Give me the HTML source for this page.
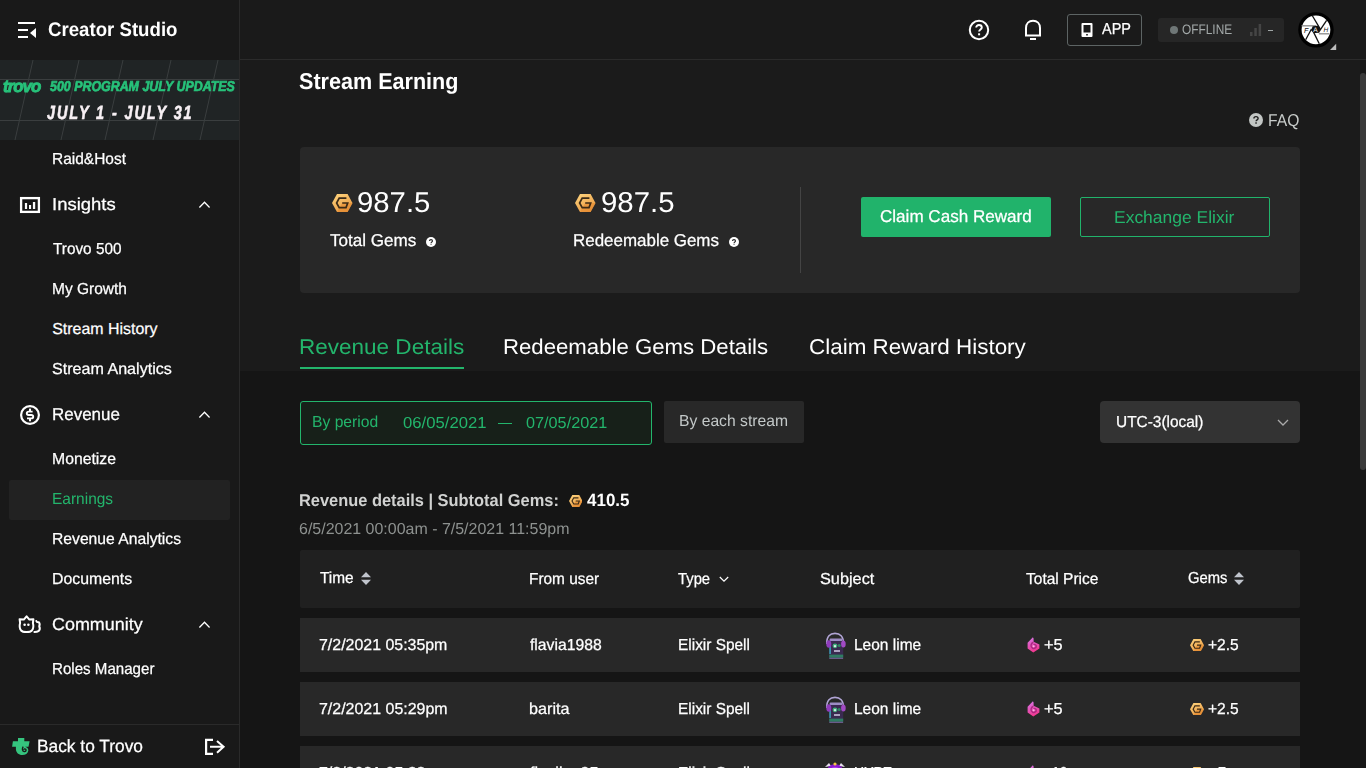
<!DOCTYPE html>
<html><head><meta charset="utf-8">
<style>
*{box-sizing:border-box;margin:0;padding:0}
html,body{width:1366px;height:768px;overflow:hidden;background:#1b1b1b;font-family:"Liberation Sans",sans-serif;color:#fff;text-rendering:geometricPrecision}
.abs{position:absolute}
#side{position:absolute;left:0;top:0;width:240px;height:768px;background:#191919;border-right:1px solid #2a2a2a}
#hdr{position:absolute;left:240px;top:0;width:1126px;height:60px;background:#1a1a1a;border-bottom:1px solid #2b2b2b}
#main{position:absolute;left:240px;top:60px;width:1120px;height:708px;background:#1b1b1b}
#lower{position:absolute;left:240px;top:371px;width:1120px;height:397px;background:#151515}
#track{position:absolute;left:1360px;top:60px;width:6px;height:708px;background:#171717}
#thumb{position:absolute;left:1360px;top:73px;width:6px;height:397px;background:#3a3a3a;border-radius:3px}
.nav{position:absolute;left:53px;font-size:15px;color:#fff;white-space:nowrap}
.sec{position:absolute;left:52px;font-size:17.5px;color:#fff;white-space:nowrap}
.chev{position:absolute;left:198px;width:12px;height:8px}
.t{position:absolute;white-space:nowrap;line-height:1;transform-origin:0 0}
.bt{position:absolute;white-space:nowrap}
</style></head>
<body>
<div id="main"></div>
<div id="lower"></div>
<div id="hdr"></div>
<div id="track"></div>
<div id="thumb"></div>

<div id="side">
  <!-- logo -->
  <svg class="abs" style="left:17px;top:21px" width="20" height="18" viewBox="0 0 20 18">
    <rect x="1" y="1" width="17" height="2" fill="#fff"/>
    <rect x="1" y="8" width="10" height="2" fill="#fff"/>
    <rect x="1" y="15" width="10" height="2" fill="#fff"/>
    <path d="M19 7 L13 12 L19 17 Z" fill="#fff"/>
  </svg>
  <!-- banner -->
  <div class="abs" style="left:0;top:60px;width:239px;height:80px;background:#202425;overflow:hidden">
    <svg class="abs" style="left:0;top:0" width="239" height="80">
      <g stroke="#3a3e3f" stroke-width="1">
        <line x1="0" y1="19.5" x2="239" y2="19.5"/>
        <line x1="0" y1="60.5" x2="239" y2="60.5"/>
        <line x1="33" y1="0" x2="15" y2="80"/>
        <line x1="79" y1="0" x2="61" y2="80"/>
        <line x1="123" y1="0" x2="105" y2="80"/>
        <line x1="171" y1="0" x2="153" y2="80"/>
        <line x1="218" y1="0" x2="200" y2="80"/>
      </g>
    </svg>
    <div class="bt" style="left:3px;top:18.2px;font-size:17.2px;line-height:1;font-weight:bold;font-style:italic;color:#27c27a;-webkit-text-stroke:0.9px #27c27a;transform-origin:0 0;transform:scaleX(0.98);letter-spacing:-1px">trovo</div>
    <div class="bt" style="left:50px;top:20.2px;font-size:14.3px;line-height:1;font-weight:bold;font-style:italic;color:#27c27a;-webkit-text-stroke:0.7px #27c27a;transform-origin:0 0;transform:scaleX(0.868)">500 PROGRAM JULY UPDATES</div>
    <div class="bt" style="left:47px;top:43.6px;font-size:19px;line-height:1;font-weight:bold;font-style:italic;color:#f7f0f4;-webkit-text-stroke:0.6px #f7f0f4;letter-spacing:2.5px;transform-origin:0 0;transform:scaleX(0.76)">JULY 1 - JULY 31</div>
  </div>


  <svg class="abs" style="left:19px;top:196px" width="22" height="18" viewBox="0 0 22 18">
    <rect x="2.1" y="2.1" width="17.8" height="13.8" fill="none" stroke="#fff" stroke-width="2.3"/>
    <rect x="5.9" y="7" width="2.2" height="6" fill="#fff"/>
    <rect x="10" y="9" width="2.1" height="4" fill="#fff"/>
    <rect x="13.9" y="6" width="2.3" height="7" fill="#fff"/>
  </svg>
  <svg class="abs" style="left:19px;top:404px" width="22" height="22" viewBox="0 0 22 22">
    <circle cx="11" cy="11" r="8.9" fill="none" stroke="#fff" stroke-width="2.2"/>
    <path d="M13.6 7.6 H9.6 C8.4 7.6 7.8 8.3 7.8 9.3 C7.8 10.3 8.4 11 9.6 11 H12.3 C13.5 11 14.2 11.7 14.2 12.7 C14.2 13.7 13.5 14.4 12.3 14.4 H8" fill="none" stroke="#fff" stroke-width="1.9"/>
    <rect x="10" y="4.6" width="2" height="3" fill="#fff"/>
    <rect x="10" y="14.3" width="2" height="3" fill="#fff"/>
  </svg>
  <svg class="abs" style="left:14px;top:610px" width="32" height="28" viewBox="0 0 32 28">
    <path d="M5.6 9.2 L9.8 9.6 L12.6 6.3 L15.4 9.6 L19.4 9.2 L18.9 13 C19.6 15.5 19.4 18.6 17.9 20.5 C16.9 21.7 14.6 22.1 12.5 22.1 C10.4 22.1 8.1 21.7 7.1 20.5 C5.6 18.6 5.4 15.5 6.1 13 Z" fill="none" stroke="#fff" stroke-width="2" stroke-linejoin="round"/>
    <circle cx="10.6" cy="14.8" r="1.25" fill="#fff"/>
    <circle cx="14.4" cy="14.8" r="1.25" fill="#fff"/>
    <path d="M22.3 11 C22.6 12 23.6 12.3 24.8 12.2 C25.7 13.2 25.9 14.8 25.2 16.2 C26 17.8 25.9 20 24.4 21.2 C23.2 21.9 21.6 21.9 20.4 21.9" fill="none" stroke="#fff" stroke-width="2" stroke-linejoin="round" stroke-linecap="round"/>
  </svg>
  <svg class="chev" style="top:201px" width="12" height="8" viewBox="0 0 12 8"><path d="M1.4 6.5 L6.5 1.2 L11.6 6.5" fill="none" stroke="#fff" stroke-width="1.3"/></svg>
  <svg class="chev" style="top:411px" width="12" height="8" viewBox="0 0 12 8"><path d="M1.4 6.5 L6.5 1.2 L11.6 6.5" fill="none" stroke="#fff" stroke-width="1.3"/></svg>
  <svg class="chev" style="top:621px" width="12" height="8" viewBox="0 0 12 8"><path d="M1.4 6.5 L6.5 1.2 L11.6 6.5" fill="none" stroke="#fff" stroke-width="1.3"/></svg>
  <svg class="abs" style="left:8px;top:734px" width="26" height="24" viewBox="0 0 26 24">
    <path d="M10 4.1 H16.3 V7.2 H21.6 L20.5 12.8 H16 C18.6 12.8 20.6 14.4 20.3 16.8 C19.9 19.6 17.4 21 14.3 21 C10.6 21 8.1 18.6 7.9 15.2 V12.8 H4.1 L4.9 7.2 H10 Z" fill="#35c47e"/>
    <path d="M15.2 12.6 C14 14.4 14.1 17.3 16.2 17.6 C17.8 17.8 18.6 16.2 17.7 15.2 C17 14.5 15.9 15 16 15.9" fill="none" stroke="#1a1a1a" stroke-width="1.4"/>
  </svg>
  <svg class="abs" style="left:200px;top:734px" width="28" height="24" viewBox="0 0 28 24">
    <path d="M13 5.8 H6.1 V19.8 H13" fill="none" stroke="#fff" stroke-width="2.2"/>
    <path d="M10 12.8 H23.5 M17 7 L23.6 12.8 L17 18.7" fill="none" stroke="#fff" stroke-width="2"/>
  </svg>
  <div class="abs" style="left:9px;top:480px;width:221px;height:40px;background:#222;border-radius:2px"></div>

  <div class="abs" style="left:0;top:724px;width:239px;height:1px;background:#2a2a2a"></div>
</div>

<!-- main content -->


<!-- header -->
<svg class="abs" style="left:968px;top:19px" width="22" height="22" viewBox="0 0 22 22">
  <circle cx="11" cy="11" r="9.2" fill="none" stroke="#fff" stroke-width="2"/>
  <path d="M8.2 8.6 C8.2 6.9 9.5 6 11 6 C12.6 6 13.8 7 13.8 8.5 C13.8 10.4 11.1 10.6 11.1 12.6" fill="none" stroke="#fff" stroke-width="1.9"/>
  <rect x="10.1" y="14.3" width="2" height="2" fill="#fff"/>
</svg>
<svg class="abs" style="left:1024px;top:19px" width="18" height="22" viewBox="0 0 18 22">
  <path d="M2 16.5 V9 C2 4.6 5 1.7 9 1.7 C13 1.7 16 4.6 16 9 V16.5 Z" fill="none" stroke="#fff" stroke-width="2"/>
  <rect x="6" y="19" width="6" height="2" fill="#fff"/>
</svg>
<div class="abs" style="left:1067px;top:14px;width:75px;height:32px;border:1px solid #5d6464;border-radius:3px"></div>
<svg class="abs" style="left:1081px;top:23px" width="12" height="15" viewBox="0 0 12 15">
  <rect x="0.5" y="0" width="11" height="14" rx="1" fill="#fff"/>
  <rect x="2.5" y="2" width="7" height="7.5" fill="#1a1a1a"/>
  <rect x="5.2" y="11" width="1.6" height="1.5" fill="#1a1a1a"/>
</svg>
<div class="abs" style="left:1158px;top:18px;width:126px;height:24px;background:#262626;border-radius:3px"></div>
<div class="abs" style="left:1170px;top:26px;width:8px;height:8px;border-radius:50%;background:#6f7777"></div>
<svg class="abs" style="left:1250px;top:24px" width="12" height="12" viewBox="0 0 12 12">
  <rect x="0" y="8" width="2.5" height="4" fill="#454545"/>
  <rect x="4.3" y="4" width="2.5" height="8" fill="#454545"/>
  <rect x="8.6" y="0" width="2.5" height="12" fill="#454545"/>
</svg>
<div class="abs" style="left:1268px;top:30px;width:5px;height:1px;background:#a0a6a6"></div>
<svg class="abs" style="left:1292px;top:8px" width="48" height="46" viewBox="0 0 801 768">
  <circle cx="400" cy="365" r="268" fill="#fff" stroke="#000" stroke-width="56"/>
  <rect x="160" y="284" width="245" height="26" fill="#9a9a9a"/>
  <rect x="448" y="417" width="175" height="26" fill="#9a9a9a"/>
  <path d="M345 305 L440 298 L472 352 L440 412 L360 422 L318 372 Z" fill="#111"/>
  <g stroke="#111" stroke-width="22" fill="none">
    <line x1="340" y1="130" x2="472" y2="352"/>
    <line x1="578" y1="205" x2="440" y2="412"/>
    <line x1="325" y1="350" x2="228" y2="530"/>
    <line x1="365" y1="415" x2="455" y2="598"/>
  </g>
  <text x="200" y="422" font-size="120" font-style="italic" font-family="Liberation Sans" fill="#111">F</text>
  <text x="355" y="402" font-size="110" font-family="Liberation Sans" fill="#fff">A</text>
  <text x="525" y="400" font-size="110" font-style="italic" font-family="Liberation Sans" fill="#111">H</text>
  <path d="M738 598 L738 702 L634 702 Z" fill="#bdbdbd"/>
</svg>

<!-- FAQ -->
<svg class="abs" style="left:1249px;top:113px" width="14" height="14" viewBox="0 0 14 14">
  <circle cx="7" cy="7" r="7" fill="#c2c6c4"/>
  <path d="M4.9 5.6 C4.9 4.3 5.8 3.6 7 3.6 C8.2 3.6 9.1 4.3 9.1 5.4 C9.1 6.8 7.1 6.9 7.1 8.3" fill="none" stroke="#1c1c1c" stroke-width="1.4"/>
  <rect x="6.3" y="9.3" width="1.5" height="1.4" fill="#1c1c1c"/>
</svg>

<!-- card -->
<div class="abs" style="left:300px;top:147px;width:1000px;height:146px;background:#282828;border-radius:4px"></div>
<svg class="abs" style="left:332px;top:194px" width="20.5" height="18" viewBox="0 0 20.5 18">
  <path d="M5 0 H15.6 L20.5 9 L15.6 18 H5 L0 9 Z" fill="url(#gg)"/><path d="M10.2 9 L20.5 9 L15.6 18 H5 Z" fill="#e4882f" opacity="0.55"/><path d="M14.4 4.2 H7.2 L4.6 9 L7.2 13.6 H14 L15.7 9 H10.2" fill="none" stroke="#3b2a16" stroke-width="1.7" stroke-linejoin="miter"/>
</svg>
<svg class="abs" style="left:426px;top:237px" width="10" height="10" viewBox="0 0 10 10">
  <circle cx="5" cy="5" r="5" fill="#fff"/>
  <path d="M3.5 4 C3.5 3.1 4.1 2.6 5 2.6 C5.9 2.6 6.5 3.1 6.5 3.9 C6.5 4.9 5.1 5 5.1 6" fill="none" stroke="#282828" stroke-width="1.1"/>
  <rect x="4.5" y="6.7" width="1.1" height="1" fill="#282828"/>
</svg>
<svg class="abs" style="left:575px;top:194px" width="20.5" height="18" viewBox="0 0 20.5 18">
  <path d="M5 0 H15.6 L20.5 9 L15.6 18 H5 L0 9 Z" fill="url(#gg)"/><path d="M10.2 9 L20.5 9 L15.6 18 H5 Z" fill="#e4882f" opacity="0.55"/><path d="M14.4 4.2 H7.2 L4.6 9 L7.2 13.6 H14 L15.7 9 H10.2" fill="none" stroke="#3b2a16" stroke-width="1.7" stroke-linejoin="miter"/>
</svg>
<svg class="abs" style="left:729px;top:237px" width="10" height="10" viewBox="0 0 10 10">
  <circle cx="5" cy="5" r="5" fill="#fff"/>
  <path d="M3.5 4 C3.5 3.1 4.1 2.6 5 2.6 C5.9 2.6 6.5 3.1 6.5 3.9 C6.5 4.9 5.1 5 5.1 6" fill="none" stroke="#282828" stroke-width="1.1"/>
  <rect x="4.5" y="6.7" width="1.1" height="1" fill="#282828"/>
</svg>
<div class="abs" style="left:800px;top:187px;width:1px;height:86px;background:#444"></div>
<div class="abs" style="left:861px;top:197px;width:190px;height:40px;background:#21b36b;border-radius:2px"></div>
<div class="abs" style="left:1080px;top:197px;width:190px;height:40px;border:1px solid #21b36b;border-radius:2px"></div>

<!-- tabs -->
<div class="abs" style="left:300px;top:367px;width:164px;height:2px;background:#23b56c"></div>

<svg width="0" height="0" style="position:absolute"><defs>
<linearGradient id="gg" x1="0.2" y1="0" x2="0.8" y2="1"><stop offset="0" stop-color="#fdd27c"/><stop offset="1" stop-color="#e8943c"/></linearGradient>
<linearGradient id="eg" x1="0.2" y1="0" x2="0.5" y2="1"><stop offset="0" stop-color="#d874e6"/><stop offset="1" stop-color="#f2368c"/></linearGradient>
</defs></svg>
<!-- filters -->
<div class="abs" style="left:300px;top:401px;width:352px;height:44px;background:#172019;border:1px solid #23b56c;border-radius:3px"></div>
<div class="abs" style="left:498px;top:423px;width:14px;height:1px;background:#23b56c"></div>
<div class="abs" style="left:664px;top:401px;width:140px;height:42px;background:#282828;border-radius:2px"></div>
<div class="abs" style="left:1100px;top:401px;width:200px;height:42px;background:#333;border-radius:4px"></div>
<svg class="abs" style="left:1277px;top:419px" width="12" height="8" viewBox="0 0 12 8"><path d="M1 1 L6 6 L11 1" fill="none" stroke="#aaa" stroke-width="1.3"/></svg>

<!-- subtotal -->
<svg class="abs" style="left:568.5px;top:495px" width="13.5" height="12" viewBox="0 0 20.5 18"><path d="M5 0 H15.6 L20.5 9 L15.6 18 H5 L0 9 Z" fill="url(#gg)"/><path d="M10.2 9 L20.5 9 L15.6 18 H5 Z" fill="#e4882f" opacity="0.55"/><path d="M14.4 4.2 H7.2 L4.6 9 L7.2 13.6 H14 L15.7 9 H10.2" fill="none" stroke="#3b2a16" stroke-width="1.7" stroke-linejoin="miter"/></svg>

<!-- table -->
<div class="abs" style="left:300px;top:550px;width:1000px;height:58px;background:#202020;border-radius:2px"></div>
<svg class="abs" style="left:361px;top:572px" width="10" height="13" viewBox="0 0 10 13"><path d="M5 0 L10 5.3 H0 Z" fill="#c0c4cc"/><path d="M5 13 L10 7.7 H0 Z" fill="#c0c4cc"/></svg>
<svg class="abs" style="left:719px;top:576px" width="10" height="7" viewBox="0 0 10 7"><path d="M0.8 1 L5 5.2 L9.2 1" fill="none" stroke="#fff" stroke-width="1.2"/></svg>
<svg class="abs" style="left:1234px;top:572px" width="10" height="13" viewBox="0 0 10 13"><path d="M5 0 L10 5.3 H0 Z" fill="#c0c4cc"/><path d="M5 13 L10 7.7 H0 Z" fill="#c0c4cc"/></svg>
<div class="abs" style="left:300px;top:618px;width:1000px;height:54px;background:#282828"></div>
<svg class="abs" style="left:824px;top:632px;filter:blur(0.3px)" width="22" height="28" viewBox="0 0 22 28"><path d="M2.8 12 C2.4 4 6.2 1.4 11 1.4 C15.8 1.4 19.8 4 19.4 12" fill="none" stroke="#b0a4d4" stroke-width="1.6"/><rect x="5.2" y="7" width="14" height="20" rx="2" fill="#3a2a50"/><rect x="5.6" y="6.6" width="13.2" height="2.4" rx="1" fill="#9d8cc4"/><rect x="5.2" y="13" width="1.8" height="9" fill="#3a90a8"/><ellipse cx="4.8" cy="12" rx="2.5" ry="3.8" fill="#8f3cbc"/><ellipse cx="19.4" cy="12" rx="2.3" ry="3.6" fill="#a24ac4"/><rect x="5.2" y="22.6" width="14" height="3.2" fill="#2f7c62"/><rect x="5.2" y="25.8" width="14" height="1.2" rx="0.6" fill="#6a5a8a"/><circle cx="11" cy="13.8" r="2.4" fill="#3faf78"/><circle cx="11" cy="14.1" r="1.2" fill="#e0e4ec"/><circle cx="15.2" cy="13.5" r="1.5" fill="#2f8a62"/><rect x="10" y="18.2" width="6" height="1.6" fill="#c8c0dc"/></svg>
<svg class="abs" style="left:1027px;top:637px" width="13" height="16" viewBox="0 0 13 16"><path d="M5.9 0.2 L0.6 5.8 V11.5 L6.3 15.4 L12.4 11.5 V7.4 L6.6 4.8 L6.6 1.4 Z" fill="url(#eg)"/><path d="M6.4 5.2 C3.6 6.2 3.2 10.2 5.6 11.2 C7.6 12 9.6 10.6 9.2 8.8 C8.9 7.6 7.6 7.2 6.6 7.8" fill="none" stroke="#a3237a" stroke-width="1.5" opacity="0.85"/><circle cx="6.6" cy="9.2" r="1" fill="#f7b8e4"/></svg>
<svg class="abs" style="left:1190px;top:639px" width="14" height="12.3" viewBox="0 0 20.5 18"><path d="M5 0 H15.6 L20.5 9 L15.6 18 H5 L0 9 Z" fill="url(#gg)"/><path d="M10.2 9 L20.5 9 L15.6 18 H5 Z" fill="#e4882f" opacity="0.55"/><path d="M14.4 4.2 H7.2 L4.6 9 L7.2 13.6 H14 L15.7 9 H10.2" fill="none" stroke="#3b2a16" stroke-width="1.7" stroke-linejoin="miter"/></svg>
<div class="abs" style="left:300px;top:682px;width:1000px;height:54px;background:#282828"></div>
<svg class="abs" style="left:824px;top:696px;filter:blur(0.3px)" width="22" height="28" viewBox="0 0 22 28"><path d="M2.8 12 C2.4 4 6.2 1.4 11 1.4 C15.8 1.4 19.8 4 19.4 12" fill="none" stroke="#b0a4d4" stroke-width="1.6"/><rect x="5.2" y="7" width="14" height="20" rx="2" fill="#3a2a50"/><rect x="5.6" y="6.6" width="13.2" height="2.4" rx="1" fill="#9d8cc4"/><rect x="5.2" y="13" width="1.8" height="9" fill="#3a90a8"/><ellipse cx="4.8" cy="12" rx="2.5" ry="3.8" fill="#8f3cbc"/><ellipse cx="19.4" cy="12" rx="2.3" ry="3.6" fill="#a24ac4"/><rect x="5.2" y="22.6" width="14" height="3.2" fill="#2f7c62"/><rect x="5.2" y="25.8" width="14" height="1.2" rx="0.6" fill="#6a5a8a"/><circle cx="11" cy="13.8" r="2.4" fill="#3faf78"/><circle cx="11" cy="14.1" r="1.2" fill="#e0e4ec"/><circle cx="15.2" cy="13.5" r="1.5" fill="#2f8a62"/><rect x="10" y="18.2" width="6" height="1.6" fill="#c8c0dc"/></svg>
<svg class="abs" style="left:1027px;top:701px" width="13" height="16" viewBox="0 0 13 16"><path d="M5.9 0.2 L0.6 5.8 V11.5 L6.3 15.4 L12.4 11.5 V7.4 L6.6 4.8 L6.6 1.4 Z" fill="url(#eg)"/><path d="M6.4 5.2 C3.6 6.2 3.2 10.2 5.6 11.2 C7.6 12 9.6 10.6 9.2 8.8 C8.9 7.6 7.6 7.2 6.6 7.8" fill="none" stroke="#a3237a" stroke-width="1.5" opacity="0.85"/><circle cx="6.6" cy="9.2" r="1" fill="#f7b8e4"/></svg>
<svg class="abs" style="left:1190px;top:703px" width="14" height="12.3" viewBox="0 0 20.5 18"><path d="M5 0 H15.6 L20.5 9 L15.6 18 H5 L0 9 Z" fill="url(#gg)"/><path d="M10.2 9 L20.5 9 L15.6 18 H5 Z" fill="#e4882f" opacity="0.55"/><path d="M14.4 4.2 H7.2 L4.6 9 L7.2 13.6 H14 L15.7 9 H10.2" fill="none" stroke="#3b2a16" stroke-width="1.7" stroke-linejoin="miter"/></svg>
<div class="abs" style="left:300px;top:746px;width:1000px;height:54px;background:#282828"></div>
<svg class="abs" style="left:822px;top:761px" width="26" height="28" viewBox="0 0 26 28"><path d="M3 6 L7 2 L9 5 Z M23 6 L19 2 L17 5 Z" fill="#e8e0f0"/><ellipse cx="13" cy="12" rx="9" ry="9" fill="#8a1ad0"/><circle cx="13" cy="3" r="1.6" fill="#f0c840"/><ellipse cx="13" cy="9" rx="5" ry="3" fill="#b040f0"/></svg>
<svg class="abs" style="left:1027px;top:765px" width="13" height="16" viewBox="0 0 13 16"><path d="M5.9 0.2 L0.6 5.8 V11.5 L6.3 15.4 L12.4 11.5 V7.4 L6.6 4.8 L6.6 1.4 Z" fill="url(#eg)"/><path d="M6.4 5.2 C3.6 6.2 3.2 10.2 5.6 11.2 C7.6 12 9.6 10.6 9.2 8.8 C8.9 7.6 7.6 7.2 6.6 7.8" fill="none" stroke="#a3237a" stroke-width="1.5" opacity="0.85"/><circle cx="6.6" cy="9.2" r="1" fill="#f7b8e4"/></svg>
<svg class="abs" style="left:1190px;top:767px" width="14" height="12.3" viewBox="0 0 20.5 18"><path d="M5 0 H15.6 L20.5 9 L15.6 18 H5 L0 9 Z" fill="url(#gg)"/><path d="M10.2 9 L20.5 9 L15.6 18 H5 Z" fill="#e4882f" opacity="0.55"/><path d="M14.4 4.2 H7.2 L4.6 9 L7.2 13.6 H14 L15.7 9 H10.2" fill="none" stroke="#3b2a16" stroke-width="1.7" stroke-linejoin="miter"/></svg>

<div class="t" style="left:47.95px;top:21.48px;font-size:19.71px;font-weight:bold;color:#fff;transform:scaleX(0.9467);">Creator Studio</div>
<div class="t" style="left:52.13px;top:151.59px;font-size:15.94px;font-weight:normal;color:#fff;transform:scaleX(0.9707);-webkit-text-stroke:0.25px #fff;">Raid&amp;Host</div>
<div class="t" style="left:51.58px;top:196.02px;font-size:17.25px;font-weight:normal;color:#fff;transform:scaleX(1.0707);-webkit-text-stroke:0.25px #fff;">Insights</div>
<div class="t" style="left:53.10px;top:241.59px;font-size:15.94px;font-weight:normal;color:#fff;transform:scaleX(0.9620);-webkit-text-stroke:0.25px #fff;">Trovo 500</div>
<div class="t" style="left:52.23px;top:282.11px;font-size:15.94px;font-weight:normal;color:#fff;transform:scaleX(0.9733);-webkit-text-stroke:0.25px #fff;">My Growth</div>
<div class="t" style="left:52.20px;top:321.85px;font-size:15.94px;font-weight:normal;color:#fff;transform:scaleX(1.0000);-webkit-text-stroke:0.25px #fff;">Stream History</div>
<div class="t" style="left:51.99px;top:361.85px;font-size:15.94px;font-weight:normal;color:#fff;transform:scaleX(1.0094);-webkit-text-stroke:0.25px #fff;">Stream Analytics</div>
<div class="t" style="left:51.62px;top:406.28px;font-size:17.25px;font-weight:normal;color:#fff;transform:scaleX(0.9838);-webkit-text-stroke:0.25px #fff;">Revenue</div>
<div class="t" style="left:52.21px;top:452.11px;font-size:15.94px;font-weight:normal;color:#fff;transform:scaleX(0.9889);-webkit-text-stroke:0.25px #fff;">Monetize</div>
<div class="t" style="left:52.23px;top:492.11px;font-size:15.94px;font-weight:normal;color:#23b56c;transform:scaleX(0.9710);">Earnings</div>
<div class="t" style="left:52.22px;top:532.37px;font-size:15.94px;font-weight:normal;color:#fff;transform:scaleX(0.9838);-webkit-text-stroke:0.25px #fff;">Revenue Analytics</div>
<div class="t" style="left:52.21px;top:572.11px;font-size:15.94px;font-weight:normal;color:#fff;transform:scaleX(0.9937);-webkit-text-stroke:0.25px #fff;">Documents</div>
<div class="t" style="left:51.56px;top:616.28px;font-size:17.25px;font-weight:normal;color:#fff;transform:scaleX(1.0395);-webkit-text-stroke:0.25px #fff;">Community</div>
<div class="t" style="left:52.25px;top:662.11px;font-size:15.94px;font-weight:normal;color:#fff;transform:scaleX(0.9477);-webkit-text-stroke:0.25px #fff;">Roles Manager</div>
<div class="t" style="left:37.32px;top:738.19px;font-size:17.68px;font-weight:normal;color:#fff;transform:scaleX(0.9804);-webkit-text-stroke:0.25px #fff;">Back to Trovo</div>
<div class="t" style="left:298.96px;top:69.56px;font-size:22.9px;font-weight:bold;color:#fff;transform:scaleX(0.9425);">Stream Earning</div>
<div class="t" style="left:1268.08px;top:111.96px;font-size:17.1px;font-weight:normal;color:#c8ccca;transform:scaleX(0.9152);">FAQ</div>
<div class="t" style="left:1101.90px;top:22.11px;font-size:15.94px;font-weight:normal;color:#fff;transform:scaleX(0.9065);-webkit-text-stroke:0.25px #fff;">APP</div>
<div class="t" style="left:1182.00px;top:22.72px;font-size:13.77px;font-weight:normal;color:#a3a9a9;transform:scaleX(0.8621);">OFFLINE</div>
<div class="t" style="left:357.48px;top:188.95px;font-size:28.7px;font-weight:normal;color:#fff;transform:scaleX(1.0214);">987.5</div>
<div class="t" style="left:330.00px;top:231.96px;font-size:17.1px;font-weight:normal;color:#fff;transform:scaleX(0.9977);-webkit-text-stroke:0.25px #fff;">Total Gems</div>
<div class="t" style="left:600.88px;top:188.95px;font-size:28.7px;font-weight:normal;color:#fff;transform:scaleX(1.0243);">987.5</div>
<div class="t" style="left:572.71px;top:231.96px;font-size:17.1px;font-weight:normal;color:#fff;transform:scaleX(0.9911);-webkit-text-stroke:0.25px #fff;">Redeemable Gems</div>
<div class="t" style="left:879.70px;top:208.30px;font-size:17.1px;font-weight:normal;color:#fff;transform:scaleX(0.9980);-webkit-text-stroke:0.25px #fff;">Claim Cash Reward</div>
<div class="t" style="left:1114.28px;top:208.77px;font-size:17.1px;font-weight:normal;color:#23b56c;transform:scaleX(1.0214);">Exchange Elixir</div>
<div class="t" style="left:298.79px;top:336.78px;font-size:21.38px;font-weight:normal;color:#23b56c;transform:scaleX(1.0532);">Revenue Details</div>
<div class="t" style="left:503.12px;top:337.20px;font-size:21.38px;font-weight:normal;color:#fff;transform:scaleX(1.0379);">Redeemable Gems Details</div>
<div class="t" style="left:808.65px;top:337.02px;font-size:21.38px;font-weight:normal;color:#fff;transform:scaleX(1.0490);">Claim Reward History</div>
<div class="t" style="left:312.32px;top:415.09px;font-size:15.94px;font-weight:normal;color:#23b56c;transform:scaleX(0.9833);">By period</div>
<div class="t" style="left:402.60px;top:416.11px;font-size:15.94px;font-weight:normal;color:#23b56c;transform:scaleX(1.0468);">06/05/2021</div>
<div class="t" style="left:525.70px;top:416.11px;font-size:15.94px;font-weight:normal;color:#23b56c;transform:scaleX(1.0190);">07/05/2021</div>
<div class="t" style="left:679.22px;top:413.95px;font-size:15.94px;font-weight:normal;color:#c3c8c8;transform:scaleX(0.9844);">By each stream</div>
<div class="t" style="left:1116.43px;top:414.61px;font-size:15.94px;font-weight:normal;color:#fff;transform:scaleX(0.9674);-webkit-text-stroke:0.25px #fff;">UTC-3(local)</div>
<div class="t" style="left:299.34px;top:491.94px;font-size:17.1px;font-weight:bold;color:#d0d1d0;transform:scaleX(0.9597);">Revenue details | Subtotal Gems:</div>
<div class="t" style="left:586.60px;top:492.49px;font-size:17.83px;font-weight:bold;color:#fff;transform:scaleX(0.9523);">410.5</div>
<div class="t" style="left:299.30px;top:521.85px;font-size:15.94px;font-weight:normal;color:#8d918f;transform:scaleX(1.0019);">6/5/2021 00:00am - 7/5/2021 11:59pm</div>
<div class="t" style="left:320.20px;top:571.11px;font-size:15.94px;font-weight:normal;color:#fff;transform:scaleX(0.9676);-webkit-text-stroke:0.25px #fff;">Time</div>
<div class="t" style="left:529.23px;top:571.65px;font-size:15.94px;font-weight:normal;color:#fff;transform:scaleX(0.9667);-webkit-text-stroke:0.25px #fff;">From user</div>
<div class="t" style="left:678.40px;top:572.11px;font-size:15.94px;font-weight:normal;color:#fff;transform:scaleX(0.9294);-webkit-text-stroke:0.25px #fff;">Type</div>
<div class="t" style="left:819.68px;top:571.77px;font-size:15.94px;font-weight:normal;color:#fff;transform:scaleX(1.0212);-webkit-text-stroke:0.25px #fff;">Subject</div>
<div class="t" style="left:1025.50px;top:572.27px;font-size:15.94px;font-weight:normal;color:#fff;transform:scaleX(0.9730);-webkit-text-stroke:0.25px #fff;">Total Price</div>
<div class="t" style="left:1188.37px;top:571.31px;font-size:15.94px;font-weight:normal;color:#fff;transform:scaleX(0.9293);-webkit-text-stroke:0.25px #fff;">Gems</div>
<div class="t" style="left:319.20px;top:637.87px;font-size:15.94px;font-weight:normal;color:#fff;transform:scaleX(0.9992);-webkit-text-stroke:0.25px #fff;">7/2/2021 05:35pm</div>
<div class="t" style="left:530.20px;top:637.87px;font-size:15.94px;font-weight:normal;color:#fff;transform:scaleX(0.9861);-webkit-text-stroke:0.25px #fff;">flavia1988</div>
<div class="t" style="left:677.73px;top:637.87px;font-size:15.94px;font-weight:normal;color:#fff;transform:scaleX(0.9671);-webkit-text-stroke:0.25px #fff;">Elixir Spell</div>
<div class="t" style="left:854.03px;top:637.85px;font-size:15.94px;font-weight:normal;color:#fff;transform:scaleX(0.9721);-webkit-text-stroke:0.25px #fff;">Leon lime</div>
<div class="t" style="left:1043.98px;top:638.11px;font-size:15.94px;font-weight:normal;color:#fff;transform:scaleX(1.0235);-webkit-text-stroke:0.25px #fff;">+5</div>
<div class="t" style="left:1208.22px;top:638.11px;font-size:15.94px;font-weight:normal;color:#fff;transform:scaleX(0.9767);-webkit-text-stroke:0.25px #fff;">+2.5</div>
<div class="t" style="left:319.20px;top:701.87px;font-size:15.94px;font-weight:normal;color:#fff;transform:scaleX(1.0008);-webkit-text-stroke:0.25px #fff;">7/2/2021 05:29pm</div>
<div class="t" style="left:529.18px;top:701.87px;font-size:15.94px;font-weight:normal;color:#fff;transform:scaleX(1.0154);-webkit-text-stroke:0.25px #fff;">barita</div>
<div class="t" style="left:677.73px;top:701.87px;font-size:15.94px;font-weight:normal;color:#fff;transform:scaleX(0.9671);-webkit-text-stroke:0.25px #fff;">Elixir Spell</div>
<div class="t" style="left:854.03px;top:701.85px;font-size:15.94px;font-weight:normal;color:#fff;transform:scaleX(0.9721);-webkit-text-stroke:0.25px #fff;">Leon lime</div>
<div class="t" style="left:1043.98px;top:702.11px;font-size:15.94px;font-weight:normal;color:#fff;transform:scaleX(1.0235);-webkit-text-stroke:0.25px #fff;">+5</div>
<div class="t" style="left:1208.22px;top:702.11px;font-size:15.94px;font-weight:normal;color:#fff;transform:scaleX(0.9767);-webkit-text-stroke:0.25px #fff;">+2.5</div>
<div class="t" style="left:319.20px;top:765.87px;font-size:15.94px;font-weight:normal;color:#fff;transform:scaleX(1.0008);-webkit-text-stroke:0.25px #fff;">7/2/2021 05:23pm</div>
<div class="t" style="left:530.20px;top:765.87px;font-size:15.94px;font-weight:normal;color:#fff;transform:scaleX(1.0194);-webkit-text-stroke:0.25px #fff;">flavilee95</div>
<div class="t" style="left:677.73px;top:765.87px;font-size:15.94px;font-weight:normal;color:#fff;transform:scaleX(0.9671);-webkit-text-stroke:0.25px #fff;">Elixir Spell</div>
<div class="t" style="left:854.12px;top:765.85px;font-size:15.94px;font-weight:normal;color:#fff;transform:scaleX(0.8810);-webkit-text-stroke:0.25px #fff;">HYPE</div>
<div class="t" style="left:1044.13px;top:766.11px;font-size:15.94px;font-weight:normal;color:#fff;transform:scaleX(0.8654);-webkit-text-stroke:0.25px #fff;">+10</div>
<div class="t" style="left:1208.18px;top:766.11px;font-size:15.94px;font-weight:normal;color:#fff;transform:scaleX(1.0235);-webkit-text-stroke:0.25px #fff;">+5</div>
</body></html>
